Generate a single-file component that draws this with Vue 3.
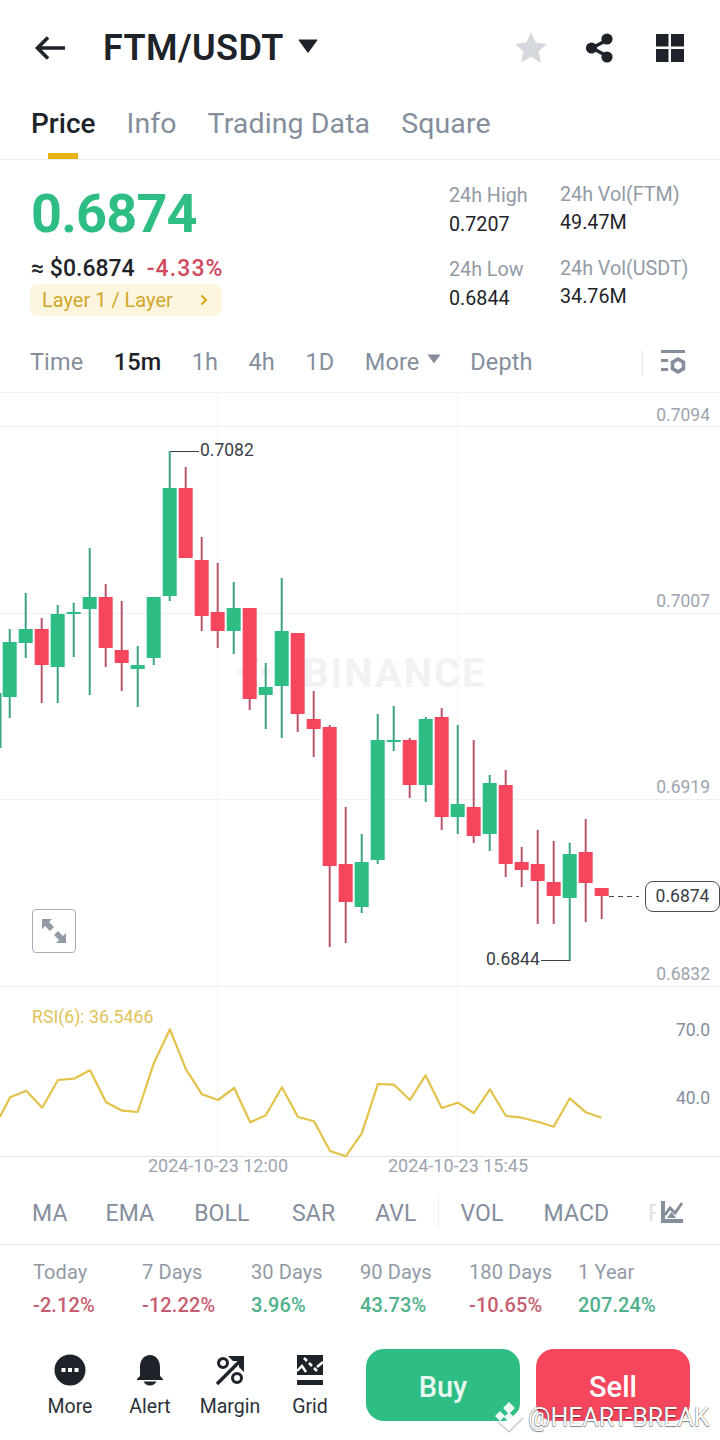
<script setup>
const green = '#2ebd85'
const red = '#f6465d'
// [centre, up?, wickTop, wickBottom, bodyTop, bodyBottom]
const raw = [
  [0.5,1,693,748,693,693],
  [9.7,1,629,718,642,697],[25.7,1,593,658,629,643],[41.7,0,618,703,629,665],[57.7,1,605,703,614,667],
  [73.7,1,603,657,612,614],[89.7,1,548,695,597,609],[105.7,0,584,667,597,648],[121.7,0,601,691,650,663],
  [137.7,1,646,707,665,669],[153.7,1,597,665,597,658],[169.7,1,451,601,488,596],[185.7,0,467,558,488,558],
  [201.7,0,537,631,560,616],[217.7,0,563,648,612,631],[233.7,1,582,654,608,631],[249.7,0,608,710,608,699],
  [265.7,1,663,729,687,695],[281.7,1,578,738,631,686],[297.7,0,633,732,633,714],[313.7,0,691,757,719,729],
  [329.7,0,725,947,727,866],[345.7,0,807,943,864,902],[361.7,1,834,913,862,907],[377.7,1,714,864,740,860],
  [393.7,1,706,751,740,742],[409.7,0,738,798,740,785],[425.7,1,717,802,719,785],[441.7,0,708,830,717,817],
  [457.7,1,725,834,804,817],[473.7,0,740,843,807,836],[489.7,1,775,851,783,834],[505.7,0,770,877,785,864],
  [521.7,0,847,887,862,870],[537.7,0,830,924,864,881],[553.7,0,841,924,882,896],[569.7,1,843,960,854,898],
  [585.7,0,819,922,852,883],[601.7,0,888,919,888,896]
]
const top = 392
const candles = raw.map(([x, up, wt, wb, bt, bb]) => ({
  x, up, wick: up ? '#3aa582' : '#b9566c', fill: up ? green : red,
  wy: wt - top, wh: wb - wt, by: bt - top, bh: bb - bt
}))
const rsiZoom = [[0,350],[22,292],[57,272],[92,323],[126,240],[161,236],[196,211],[231,307],[266,332],[300,336],[335,190],[370,88],[405,208],[440,283],[475,300],[510,264],[545,367],[579,346],[614,262],[649,351],[684,364],[719,453],[753,469],[788,400],[823,252],[858,254],[893,300],[927,226],[962,324],[997,308],[1032,339],[1067,268],[1102,348],[1136,353],[1171,365],[1206,380],[1241,295],[1276,337],[1310,353]]
const rsi = rsiZoom.map(([x, y]) => `${(x / 2.178).toFixed(1)},${(1000 + y / 3 - top).toFixed(1)}`).join(' ')
const gridH = [0, 34, 221, 407, 594]
const axis = [['0.7094', 29], ['0.7007', 215], ['0.6919', 401], ['0.6832', 588]]
const tabs = ['Info', 'Trading Data', 'Square']
const stats = [
  { a: '24h High', b: '0.7207', c: '24h Vol(FTM)', d: '49.47M' },
  { a: '24h Low', b: '0.6844', c: '24h Vol(USDT)', d: '34.76M' }
]
const inds = ['MA', 'EMA', 'BOLL', 'SAR', 'AVL']
const inds2 = ['VOL', 'MACD']
const days = [
  ['Today', '-2.12%', 0], ['7 Days', '-12.22%', 0], ['30 Days', '3.96%', 1],
  ['90 Days', '43.73%', 1], ['180 Days', '-10.65%', 0], ['1 Year', '207.24%', 1]
]
</script>

<template>
  <div class="page">
    <header class="head">
      <svg class="back" width="32" height="26" viewBox="0 0 32 26"><path d="M31 13H4M14 2.5 3.5 13 14 23.5" fill="none" stroke="#1e2329" stroke-width="3.6"/></svg>
      <span class="pair">FTM/USDT</span>
      <svg class="caret" width="20" height="14" viewBox="0 0 20 14"><path d="M1 1h18L10 13.5z" fill="#1e2329" stroke="#1e2329" stroke-linejoin="round"/></svg>
      <div class="head-icons">
        <svg width="32" height="32" viewBox="0 0 32 32"><path d="M16 1.5l4.4 9.6 10.4 1.2-7.7 7 2.2 10.4L16 24.4 6.7 29.7l2.2-10.4-7.7-7 10.4-1.2z" fill="#d5d8dd" stroke="#d5d8dd" stroke-linejoin="round"/></svg>
        <svg width="32" height="32" viewBox="0 0 32 32"><path d="M23 8 8 16l15 8" fill="none" stroke="#1e2329" stroke-width="3.4"/><circle cx="23" cy="7" r="5.6" fill="#1e2329"/><circle cx="7.5" cy="16" r="5.6" fill="#1e2329"/><circle cx="23" cy="25" r="5.6" fill="#1e2329"/></svg>
        <svg class="grid-ic" width="28" height="28" viewBox="0 0 28 28"><path d="M0 0h12.5v12.5H0zM15 0h13v12.5H15zM0 15h12.5v13H0zM15 15h13v13H15z" fill="#1e2329"/></svg>
      </div>
    </header>

    <nav class="tabs">
      <span class="tab on">Price<i class="ink"></i></span>
      <span v-for="t in tabs" :key="t" class="tab">{{ t }}</span>
    </nav>

    <section class="stats">
      <div class="left">
        <div class="big">0.6874</div>
        <div class="sub"><span class="usd">≈ $0.6874</span><span class="chg">-4.33%</span></div>
        <div class="tag"><span>Layer 1 / Layer</span>
          <svg width="8" height="12" viewBox="0 0 8 12"><path d="M1.5 1.5 6 6l-4.500 4.500" fill="none" stroke="#d9a81c" stroke-width="2.200"/></svg>
        </div>
      </div>
      <div class="right">
        <div v-for="s in stats" :key="s.a" class="srow">
          <div class="col1"><div class="lab">{{ s.a }}</div><div class="val">{{ s.b }}</div></div>
          <div class="col2"><div class="lab">{{ s.c }}</div><div class="val">{{ s.d }}</div></div>
        </div>
      </div>
    </section>

    <div class="times">
      <span class="t">Time</span><span class="t cur">15m</span><span class="t">1h</span><span class="t">4h</span><span class="t">1D</span>
      <span class="t more">More<svg width="14" height="10" viewBox="0 0 14 10"><path d="M.5.500h13L7 9.500z" fill="#848e9c"/></svg></span>
      <span class="t">Depth</span>
      <span class="tools">
        <svg width="26" height="24" viewBox="0 0 26 24"><path d="M1 1.500h24" stroke="#848e9c" stroke-width="3"/><path d="M1 10.500h7M1 19.500h7" stroke="#848e9c" stroke-width="3"/><path d="M18 9l5.500 3.200v6.400L18 21.800l-5.500-3.200v-6.400z" fill="none" stroke="#848e9c" stroke-width="3.600"/></svg>
      </span>
    </div>

    <div class="chart">
      <svg class="plot" width="720" height="786" viewBox="0 0 720 786">
        <g stroke="#eff1f3" stroke-width="1">
          <line v-for="y in gridH" :key="y" x1="0" x2="720" :y1="y + .5" :y2="y + .5" />
          <line x1="218" x2="218" y1="0" y2="764" />
          <line x1="458" x2="458" y1="0" y2="764" />
        </g>
        <line x1="0" x2="720" y1="764.500" y2="764.500" stroke="#e3e5e8" />
        <text x="303" y="295" class="wm">BINANCE</text>
        <path d="M254 262l-6 6 6 6 6-6zM242 274l-6 6 6 6 6-6zM254 286l-6 6 6 6 6-6zM266 274l-6 6 6 6 6-6z" fill="#f1f2f4" />
        <g v-for="c in candles" :key="c.x">
          <rect :x="c.x - 1" :y="c.wy" width="2" :height="c.wh" :fill="c.wick" />
          <rect :x="c.x - 7" :y="c.by" width="14" :height="c.bh" :fill="c.fill" />
        </g>
        <path d="M170.700 59V59.500H199" fill="none" stroke="#3a4048" />
        <text x="200" y="64" class="mark">0.7082</text>
        <path d="M570.500 568.500H541" fill="none" stroke="#3a4048" />
        <text x="486" y="573" class="mark">0.6844</text>
        <path d="M609 504.500h30" stroke="#474d57" stroke-dasharray="5 4" />
        <text v-for="a in axis" :key="a[0]" x="710" :y="a[1]" text-anchor="end" class="ax">{{ a[0] }}</text>
        <text x="32" y="631" class="rsi">RSI(6): 36.5466</text>
        <text x="710" y="644" text-anchor="end" class="ax dark">70.0</text>
        <text x="710" y="712" text-anchor="end" class="ax dark">40.0</text>
        <polyline :points="rsi" fill="none" stroke="#e3c24a" stroke-width="2.200" stroke-linejoin="round" />
        <text x="218" y="780" text-anchor="middle" class="ax date">2024-10-23 12:00</text>
        <text x="458" y="780" text-anchor="middle" class="ax date">2024-10-23 15:45</text>
      </svg>
      <div class="expand">
        <svg width="24" height="24" viewBox="0 0 24 24"><path d="M0 0h10L7 3l5 5-4 4-5-5-3 3zM24 24H14l3-3-5-5 4-4 5 5 3-3z" fill="#929aa5"/></svg>
      </div>
      <div class="pill">0.6874</div>
    </div>

    <div class="inds">
      <span v-for="i in inds" :key="i" class="ind">{{ i }}</span>
      <i class="vsep"></i>
      <span v-for="i in inds2" :key="i" class="ind">{{ i }}</span>
      <span class="cut">R</span>
      <svg class="ind-ic" width="22" height="22" viewBox="0 0 22 22"><path d="M2 0v20h20" fill="none" stroke="#848e9c" stroke-width="4"/><path d="M4 14l5-7 5 5 7-10" fill="none" stroke="#848e9c" stroke-width="2.800"/><path d="M6 17h9l-4.500-6z" fill="#848e9c"/></svg>
    </div>

    <div class="days">
      <div v-for="d in days" :key="d[0]" class="day">
        <div class="dl">{{ d[0] }}</div>
        <div class="dv" :class="d[2] ? 'up' : 'down'">{{ d[1] }}</div>
      </div>
    </div>

    <footer class="foot">
      <div class="act">
        <svg width="32" height="32" viewBox="0 0 32 32"><circle cx="16" cy="16" r="15.500" fill="#1e2329"/><path d="M7.500 14h4v4h-4zM14 14h4v4h-4zM20.500 14h4v4h-4z" fill="#fff"/></svg>
        <span>More</span>
      </div>
      <div class="act">
        <svg width="30" height="32" viewBox="0 0 30 32"><path d="M5 13C5 6 9 1 15 1s10 5 10 12v9l3 3v1H2v-1l3-3z" fill="#1e2329"/><path d="M8.500 27.500h13C20 30 18 31.500 15 31.500S10 30 8.500 27.500z" fill="#1e2329"/></svg>
        <span>Alert</span>
      </div>
      <div class="act">
        <svg width="30" height="32" viewBox="0 0 30 32"><path d="M2 30 25 7" stroke="#1e2329" stroke-width="3.400"/><path d="M13 2h16v16l-5-5V7h-6z" fill="#1e2329"/><circle cx="8" cy="9" r="4.500" fill="none" stroke="#1e2329" stroke-width="3"/><circle cx="22" cy="24" r="4.500" fill="none" stroke="#1e2329" stroke-width="3"/></svg>
        <span>Margin</span>
      </div>
      <div class="act">
        <svg width="30" height="32" viewBox="0 0 30 32"><path d="M2 1h26v20H2z" fill="#1e2329"/><path d="M9 4l3 3M14 9l3 3M19 14l3 3" stroke="#fff" stroke-width="2.600"/><path d="M2 17l5-5 4 6M28 8l-6 5" fill="none" stroke="#fff" stroke-width="2.400"/><path d="M2 26h26v5H2z" fill="#1e2329"/></svg>
        <span>Grid</span>
      </div>
      <button class="btn buy">Buy</button>
      <button class="btn sell">Sell</button>
    </footer>

    <div class="stamp">
      <svg width="32" height="32" viewBox="0 0 32 32"><path d="M14 1l6 6-6 6-6-6zM5 10l5 5-5 5-5-5zM23 10l5 5-5 5-5-5zM14 11l5 5-5 5-5-5z" fill="#fff" opacity=".9"/><path d="M3 21l11 10 14-14" fill="none" stroke="#c6cbd1" stroke-width="1.500"/></svg>
      <span>@HEART-BREAK</span>
    </div>
  </div>
</template>

<style>
html, body { margin: 0; background: #fff; }
</style>

<style scoped>
.page { position: relative; width: 720px; height: 1440px; overflow: hidden; background: #fff; font-family: Roboto, "Noto Sans", sans-serif; color: #1e2329; }
.head { height: 96px; display: flex; align-items: center; padding: 0 34px; box-sizing: border-box; }
.back { margin-right: 37px; }
.pair { font-size: 36px; font-weight: 600; letter-spacing: .4px; color: #1e2329; }
.caret { margin: -4px 0 0 14px; }
.head-icons { margin-left: auto; margin-right: 2px; display: flex; align-items: center; gap: 37px; }
.grid-ic { margin-left: 3px; }
.tabs { height: 64px; box-sizing: border-box; border-bottom: 1px solid #eaecef; display: flex; gap: 31px; padding: 8px 0 0 31px; }
.tab { position: relative; font-size: 28.500px; line-height: 40px; color: #848e9c; letter-spacing: .1px; }
.tab.on { color: #1e2329; font-size: 28px; letter-spacing: 0; font-weight: 500; }
.ink { position: absolute; left: 17px; top: 49px; width: 30px; height: 6px; background: #e6b416; }
.stats { height: 180px; display: flex; position: relative; box-sizing: border-box; }
.left { width: 449px; padding: 27px 0 0 31px; box-sizing: border-box; }
.big { font-size: 54px; line-height: 54px; font-weight: 700; color: #2ebd85; letter-spacing: -.8px; }
.sub { display: flex; gap: 12px; margin-top: 14px; font-size: 23px; line-height: 28px; font-weight: 500; white-space: nowrap; }
.chg { color: #cf4a5e; letter-spacing: 1.100px; }
.tag { width: 192px; height: 32px; margin-top: 1px; margin-left: -1px; padding: 0 14px 0 12px; box-sizing: border-box; display: flex; justify-content: space-between; align-items: center; background: #fdf6df; border-radius: 8px; color: #d0a72a; font-size: 20px; }
.right { padding-top: 23px; }
.srow { display: flex; height: 74px; }
.col1 { width: 111px; }
.lab { font-size: 19.700px; line-height: 26px; color: #929aa5; }
.val { font-size: 19.700px; line-height: 32px; color: #1e2329; }
.col2 { margin-top: -1px; }
.col2 .val { line-height: 30px; }
.times { height: 52px; box-sizing: border-box; display: flex; align-items: center; padding: 0 0 8px 30px; position: relative; }
.t { font-size: 23.500px; color: #848e9c; margin-right: 30.500px; letter-spacing: .1px; }
.t.cur { color: #1e2329; font-weight: 500; }
.more { display: inline-flex; align-items: flex-start; gap: 8px; margin-right: 29px; }
.more svg { margin-top: 6px; }
.tools { position: absolute; left: 642px; top: 10px; height: 26px; padding-left: 17px; border-left: 1px solid #e6e8ea; }
.chart { position: relative; height: 786px; }
.plot { display: block; }
.wm { font-family: Roboto, sans-serif; font-size: 40px; font-weight: 700; letter-spacing: 2px; fill: #f1f2f4; }
.mark { font-size: 17.500px; fill: #3a4048; }
.ax { font-size: 17.500px; fill: #9da4ae; }
.ax.dark { fill: #848e9c; }
.ax.date { font-size: 18px; fill: #9da4ae; }
.rsi { font-size: 17.700px; fill: #e2c35a; }
.expand { position: absolute; left: 32px; top: 517px; width: 44px; height: 44px; box-sizing: border-box; border: 1px solid #a7adb6; border-radius: 4px; background: #fff; display: flex; align-items: center; justify-content: center; }
.pill { position: absolute; left: 645px; top: 489px; width: 75px; height: 31px; box-sizing: border-box; border: 1px solid #474d57; border-radius: 8px; background: #fff; font-size: 17.500px; line-height: 29px; text-align: center; color: #3a4048; }
.inds { height: 67px; box-sizing: border-box; border-bottom: 1px solid #eaecef; display: flex; align-items: center; padding: 4px 0 0 32px; position: relative; color: #848e9c; font-size: 23px; }
.ind { margin-right: 40px; letter-spacing: .1px; }
.ind:nth-child(1) { margin-right: 38px; }
.ind:nth-child(3) { margin-right: 42.500px; }
.ind:nth-child(5) { margin-right: 21px; }
.vsep { width: 1px; height: 32px; background: #eceef0; margin: -4px 22px 0 0; }
.cut { position: absolute; left: 648px; color: #dfe1e4; width: 8px; overflow: hidden; }
.ind-ic { position: absolute; left: 661px; top: 23px; }
.days { height: 90px; display: flex; padding: 12px 0 0 33px; box-sizing: border-box; }
.day { width: 109px; }
.dl { font-size: 20px; line-height: 30px; color: #929aa5; letter-spacing: .1px; }
.dv { font-size: 20px; line-height: 36px; font-weight: 500; letter-spacing: .1px; }
.up { color: #4fb08d; }
.down { color: #c75d70; }
.foot { position: relative; height: 105px; }
.act { position: absolute; top: 19px; width: 80px; display: flex; flex-direction: column; align-items: center; gap: 8px; font-size: 19.500px; line-height: 26px; color: #2b3139; }
.act:nth-child(1) { left: 30px; }
.act:nth-child(2) { left: 110px; }
.act:nth-child(3) { left: 190px; }
.act:nth-child(4) { left: 270px; }
.btn { position: absolute; top: 14px; width: 154px; height: 72px; border: 0; border-radius: 18px; color: #fff; font: 500 29px/72px Roboto, sans-serif; padding: 2px 0 0; box-sizing: border-box; }
.buy { left: 366px; background: #2ebd85; color: #e6f8f0; }
.sell { left: 536px; background: #f6465d; }
.stamp { position: absolute; left: 495px; top: 1401px; display: flex; align-items: center; gap: 1px; font-size: 25px; color: #fff; text-shadow: 0 0 1px #3b3b3b, 0 1px 1px rgba(0,0,0,.45); white-space: nowrap; }
</style>
